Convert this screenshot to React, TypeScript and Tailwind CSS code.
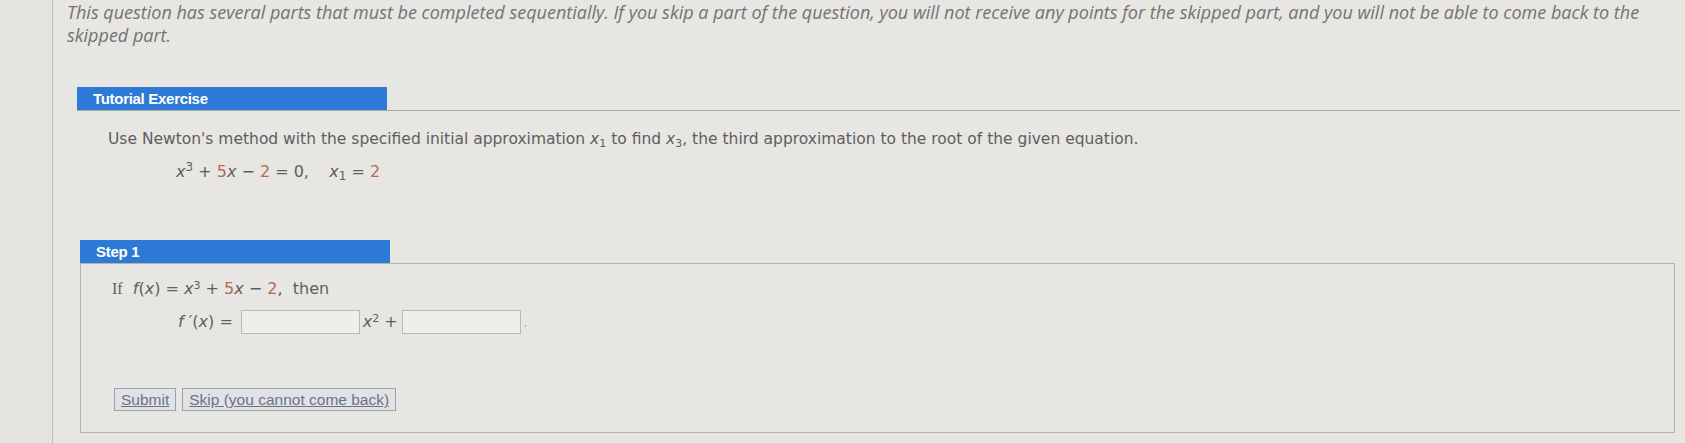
import React from 'react';

// WebAssign-style tutorial step, photographed off a screen

const sans = { fontFamily: '"DejaVu Sans", Verdana, sans-serif' };

function Bar({ label, className = '' }: { label: string; className?: string }) {
  return (
    <div className={`w-[310px] h-[23px] bg-[#2c7ad6] text-white text-[15px] font-bold pl-[16px] leading-[23px] font-['Liberation_Sans',Arial,sans-serif] tracking-[-0.3px] ${className}`}>
      {label}
    </div>
  );
}

function Blank({ w = 119 }: { w?: number }) {
  return <span className="inline-block h-[24px] border border-[#b9b9b6] bg-[#eeeeea] align-middle" style={{ width: w }} />;
}

export default function App() {
  return (
    <div className="flex h-[443px] w-[1685px] overflow-hidden bg-[#e7e6e2] text-[#6a6a6a]">
      <div className="w-[53px] shrink-0 border-r border-[#bdbdb9] bg-[#e4e3df]" />
      <div className="flex-1 pl-[14px]">
        <p className="pt-[1px] pr-[25px] text-[18px] leading-[23px] italic text-[#737373] font-['Open_Sans',sans-serif]">
          This question has several parts that must be completed sequentially. If you skip a part of the question, you will not receive any points for the skipped part, and you will not be able to come back to the skipped part.
        </p>

        <div className="mt-[40px] ml-[10px] mr-[5px] flex items-end border-b border-[#a9a9a6]">
          <Bar label="Tutorial Exercise" />
        </div>

        <div className="pl-[41px] pt-[17px] text-[15.5px] text-[#5e5e5e]" style={sans}>
          <p className="leading-[22px]">
            Use Newton's method with the specified initial approximation <i>x</i><sub className="text-[11px]">1</sub> to find <i>x</i><sub className="text-[11px]">3</sub>, the third approximation to the root of the given equation.
          </p>
          <p className="mt-[11px] pl-[68px] text-[16px] leading-[22px]">
            <i>x</i><sup className="text-[12px]">3</sup> + <span className="text-[#b5695c]">5</span><i>x</i> − <span className="text-[#b5695c]">2</span> = 0,&nbsp;&nbsp;&nbsp; <i>x</i><sub className="text-[12px]">1</sub> = <span className="text-[#b5695c]">2</span>
          </p>
        </div>

        <div className="mt-[57px] ml-[13px] mr-[10px]">
          <Bar label="Step 1" />
          <div className="h-[170px] border border-[#b3b3b0] pl-[31px] pt-[14px]" style={sans}>
            <p className="text-[16px] leading-[22px] text-[#5e5e5e]">
              <span className="font-['Liberation_Serif',serif] text-[16px]">If</span>&nbsp; <i>f</i>(<i>x</i>) = <i>x</i><sup className="text-[11px]">3</sup> + <span className="text-[#b5695c]">5</span><i>x</i> − <span className="text-[#b5695c]">2</span>,&nbsp; then
            </p>
            <div className="mt-[10px] flex items-center pl-[66px] text-[16px] text-[#5e5e5e]">
              <span className="mr-[8px]"><i>f</i> ′(<i>x</i>) =</span>
              <Blank />
              <span className="ml-[3px] mr-[4px]"><i>x</i><sup className="text-[11px]">2</sup> +</span>
              <Blank />
              <span className="ml-[2px] text-[#bbb]">.</span>
            </div>
            <div className="mt-[54px] flex gap-[6px] pl-[2px] font-['Liberation_Sans',Arial,sans-serif] text-[15.5px]">
              <button className="h-[23px] px-[6px] border border-[#9ea3aa] bg-[#dfe3e8] text-[#6f7378] underline leading-[21px]">Submit</button>
              <button className="h-[23px] px-[6px] border border-[#9ea3aa] bg-[#dfe3e8] text-[#6f7378] underline leading-[21px]">Skip (you cannot come back)</button>
            </div>
          </div>
        </div>
      </div>
    </div>
  );
}
